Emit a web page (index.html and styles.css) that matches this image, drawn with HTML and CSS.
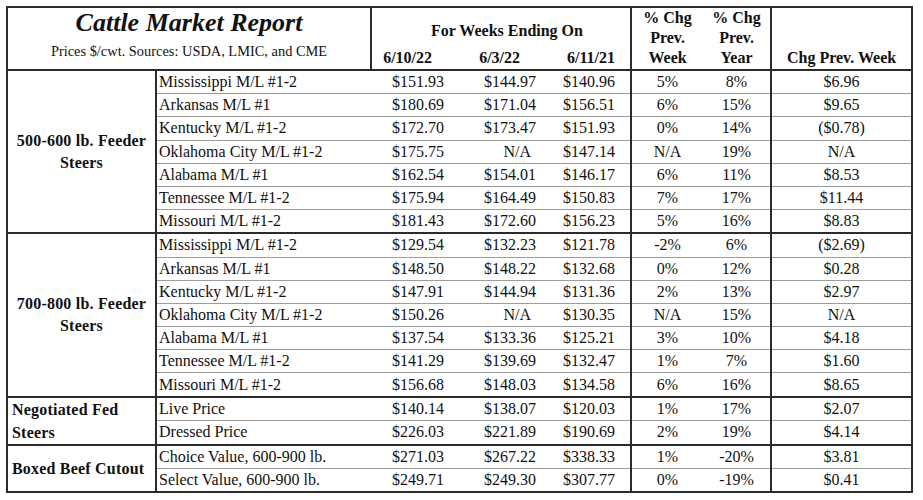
FILE: index.html
```html
<!DOCTYPE html>
<html>
<head>
<meta charset="utf-8">
<link rel="stylesheet" href="styles.css">
</head>
<body>
<table class="report">
  <colgroup>
    <col class="w-grp"><col class="w-sub"><col class="w-d1"><col class="w-d2"><col class="w-d3"><col class="w-p1"><col class="w-p2"><col class="w-chg">
  </colgroup>
  <thead>
    <tr class="h1">
      <th colspan="2" rowspan="2" class="title-cell">
        <div class="title">Cattle Market Report</div>
        <div class="subtitle">Prices $/cwt. Sources: USDA, LMIC, and CME</div>
      </th>
      <th colspan="3" class="weeks">For Weeks Ending On</th>
      <th rowspan="2" class="pct vl">% Chg<br>Prev.<br>Week</th>
      <th rowspan="2" class="pct">% Chg<br>Prev.<br>Year</th>
      <th rowspan="2" class="chg vl">Chg Prev. Week</th>
    </tr>
    <tr class="h2">
      <th class="d d1">6/10/22</th>
      <th class="d d2">6/3/22</th>
      <th class="d d3">6/11/21</th>
    </tr>
  </thead>
  <tbody>
    <tr class="gstart">
      <td rowspan="7" class="grp center">500-600 lb. Feeder<br>Steers</td>
      <td class="sub">Mississippi M/L #1-2</td><td class="n d1">$151.93</td><td class="n d2">$144.97</td><td class="n d3">$140.96</td><td class="p vl">5%</td><td class="p">8%</td><td class="c vl">$6.96</td>
    </tr>
    <tr><td class="sub">Arkansas M/L #1</td><td class="n d1">$180.69</td><td class="n d2">$171.04</td><td class="n d3">$156.51</td><td class="p vl">6%</td><td class="p">15%</td><td class="c vl">$9.65</td></tr>
    <tr><td class="sub">Kentucky M/L #1-2</td><td class="n d1">$172.70</td><td class="n d2">$173.47</td><td class="n d3">$151.93</td><td class="p vl">0%</td><td class="p">14%</td><td class="c vl">($0.78)</td></tr>
    <tr><td class="sub">Oklahoma City M/L #1-2</td><td class="n d1">$175.75</td><td class="n d2 na">N/A</td><td class="n d3">$147.14</td><td class="p vl">N/A</td><td class="p">19%</td><td class="c vl">N/A</td></tr>
    <tr><td class="sub">Alabama M/L #1</td><td class="n d1">$162.54</td><td class="n d2">$154.01</td><td class="n d3">$146.17</td><td class="p vl">6%</td><td class="p">11%</td><td class="c vl">$8.53</td></tr>
    <tr><td class="sub">Tennessee M/L #1-2</td><td class="n d1">$175.94</td><td class="n d2">$164.49</td><td class="n d3">$150.83</td><td class="p vl">7%</td><td class="p">17%</td><td class="c vl">$11.44</td></tr>
    <tr><td class="sub">Missouri M/L #1-2</td><td class="n d1">$181.43</td><td class="n d2">$172.60</td><td class="n d3">$156.23</td><td class="p vl">5%</td><td class="p">16%</td><td class="c vl">$8.83</td></tr>

    <tr class="gstart">
      <td rowspan="7" class="grp center">700-800 lb. Feeder<br>Steers</td>
      <td class="sub">Mississippi M/L #1-2</td><td class="n d1">$129.54</td><td class="n d2">$132.23</td><td class="n d3">$121.78</td><td class="p vl">-2%</td><td class="p">6%</td><td class="c vl">($2.69)</td>
    </tr>
    <tr><td class="sub">Arkansas M/L #1</td><td class="n d1">$148.50</td><td class="n d2">$148.22</td><td class="n d3">$132.68</td><td class="p vl">0%</td><td class="p">12%</td><td class="c vl">$0.28</td></tr>
    <tr><td class="sub">Kentucky M/L #1-2</td><td class="n d1">$147.91</td><td class="n d2">$144.94</td><td class="n d3">$131.36</td><td class="p vl">2%</td><td class="p">13%</td><td class="c vl">$2.97</td></tr>
    <tr><td class="sub">Oklahoma City M/L #1-2</td><td class="n d1">$150.26</td><td class="n d2 na">N/A</td><td class="n d3">$130.35</td><td class="p vl">N/A</td><td class="p">15%</td><td class="c vl">N/A</td></tr>
    <tr><td class="sub">Alabama M/L #1</td><td class="n d1">$137.54</td><td class="n d2">$133.36</td><td class="n d3">$125.21</td><td class="p vl">3%</td><td class="p">10%</td><td class="c vl">$4.18</td></tr>
    <tr><td class="sub">Tennessee M/L #1-2</td><td class="n d1">$141.29</td><td class="n d2">$139.69</td><td class="n d3">$132.47</td><td class="p vl">1%</td><td class="p">7%</td><td class="c vl">$1.60</td></tr>
    <tr><td class="sub">Missouri M/L #1-2</td><td class="n d1">$156.68</td><td class="n d2">$148.03</td><td class="n d3">$134.58</td><td class="p vl">6%</td><td class="p">16%</td><td class="c vl">$8.65</td></tr>

    <tr class="gstart">
      <td rowspan="2" class="grp left">Negotiated Fed<br>Steers</td>
      <td class="sub">Live Price</td><td class="n d1">$140.14</td><td class="n d2">$138.07</td><td class="n d3">$120.03</td><td class="p vl">1%</td><td class="p">17%</td><td class="c vl">$2.07</td>
    </tr>
    <tr><td class="sub">Dressed Price</td><td class="n d1">$226.03</td><td class="n d2">$221.89</td><td class="n d3">$190.69</td><td class="p vl">2%</td><td class="p">19%</td><td class="c vl">$4.14</td></tr>

    <tr class="gstart">
      <td rowspan="2" class="grp left">Boxed Beef Cutout</td>
      <td class="sub">Choice Value, 600-900 lb.</td><td class="n d1">$271.03</td><td class="n d2">$267.22</td><td class="n d3">$338.33</td><td class="p vl">1%</td><td class="p">-20%</td><td class="c vl">$3.81</td>
    </tr>
    <tr><td class="sub">Select Value, 600-900 lb.</td><td class="n d1">$249.71</td><td class="n d2">$249.30</td><td class="n d3">$307.77</td><td class="p vl">0%</td><td class="p">-19%</td><td class="c vl">$0.41</td></tr>
  </tbody>
</table>
</body>
</html>
```

FILE: styles.css
```css
html, body {
  margin: 0;
  padding: 0;
  background: #ffffff;
}

body {
  padding: 6px 0 0 6px;
  font-family: "Liberation Serif", "Times New Roman", serif;
  color: #111111;
}

.report {
  border-collapse: collapse;
  table-layout: fixed;
  width: 905px;
  border: 2px solid #2b2b2b;
  font-size: 16px;
}

.w-grp { width: 149px; }
.w-sub { width: 215px; }
.w-d1 { width: 85px; }
.w-d2 { width: 95px; }
.w-d3 { width: 80px; }
.w-p1 { width: 72px; }
.w-p2 { width: 68px; }
.w-chg { width: 141px; }

th {
  padding: 0;
  font-weight: bold;
  font-size: 16px;
  line-height: 20px;
}

.h1 th { height: 30px; }
.h2 th { height: 22px; }

.title-cell {
  border-right: 2px solid #2b2b2b;
  text-align: center;
  vertical-align: top;
  font-weight: normal;
}

.title {
  font-size: 26px;
  font-weight: bold;
  font-style: italic;
  line-height: 29px;
}

.subtitle {
  font-size: 14.4px;
  line-height: 20px;
  padding-top: 4px;
}

.weeks {
  text-align: center;
  vertical-align: bottom;
  padding-bottom: 2px;
  padding-left: 12px;
}

.d {
  vertical-align: bottom;
  text-align: right;
  padding-bottom: 1px;
}

.h2 .d1 { padding-right: 24px; }
.h2 .d2 { padding-right: 31px; }
.h2 .d3 { padding-right: 15px; }

.pct {
  text-align: center;
  vertical-align: bottom;
  padding-bottom: 1px;
}

.chg {
  text-align: center;
  vertical-align: bottom;
  padding-bottom: 1px;
}

.vl { border-left: 2px solid #2b2b2b; }

thead tr.h2 th, thead .pct, thead .chg, thead .title-cell {
  border-bottom: 2px solid #2b2b2b;
}

td {
  padding: 0;
  height: 22.2px;
  line-height: 20px;
  border-top: 1px solid #9c9c9c;
  white-space: nowrap;
}

tr.gstart td { border-top: 2px solid #2b2b2b; }

.grp {
  border-right: 2px solid #2b2b2b;
  font-weight: bold;
  line-height: 22px;
  vertical-align: middle;
  letter-spacing: 0.2px;
}

.grp.center { text-align: center; padding-top: 1px; }
.grp.left { text-align: left; padding-left: 4px; line-height: 23px; }

.sub {
  text-align: left;
  padding-left: 2px;
}

.n { text-align: right; }
.n.d1 { padding-right: 12px; }
.n.d2 { padding-right: 15px; }
.n.d3 { padding-right: 15px; }
.n.na { padding-right: 20px; }

.p { text-align: center; }
.c { text-align: center; }
```
